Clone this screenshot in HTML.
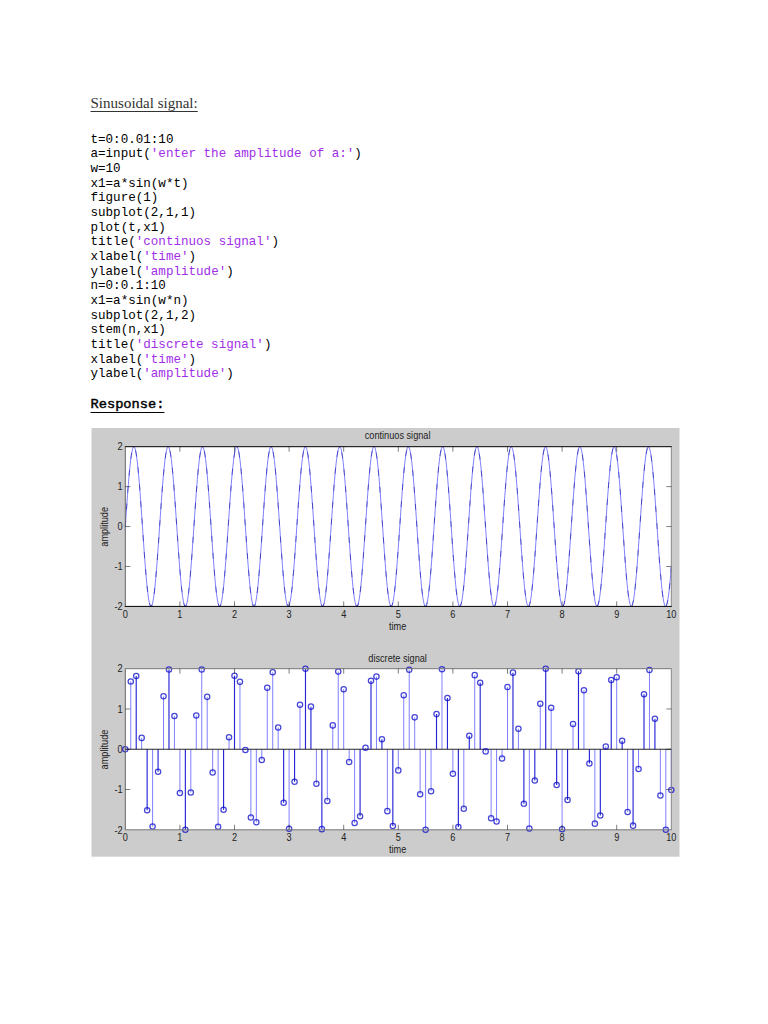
<!DOCTYPE html>
<html><head><meta charset="utf-8"><title>Sinusoidal signal</title>
<style>
html,body{margin:0;padding:0;background:#fff;}
body{width:768px;height:1024px;position:relative;overflow:hidden;}
.h{position:absolute;left:90.5px;top:94.4px;font-family:"Liberation Serif","Times New Roman",serif;font-size:15.02px;line-height:18px;color:#333;text-decoration:underline;text-decoration-thickness:1px;text-underline-offset:2.6px;text-decoration-skip-ink:none;white-space:nowrap;}
pre{position:absolute;left:90.5px;top:132.6px;margin:0;font-family:"Liberation Mono","Courier New",monospace;font-size:12.57px;line-height:14.67px;color:#000;white-space:pre;}
pre .s{color:#9f2ee8;}
.r{text-decoration-skip-ink:none;position:absolute;left:90.5px;top:396.5px;font-family:"Liberation Mono","Courier New",monospace;font-size:13.7px;line-height:16px;text-decoration-thickness:1.3px;text-underline-offset:3.9px;font-weight:normal;-webkit-text-stroke:0.45px #000;color:#000;text-decoration:underline;white-space:nowrap;}
</style></head><body>
<div class="h">Sinusoidal signal:</div>
<pre>t=0:0.01:10
a=input(<span class="s">'enter the amplitude of a:'</span>)
w=10
x1=a*sin(w*t)
figure(1)
subplot(2,1,1)
plot(t,x1)
title(<span class="s">'continuos signal'</span>)
xlabel(<span class="s">'time'</span>)
ylabel(<span class="s">'amplitude'</span>)
n=0:0.1:10
x1=a*sin(w*n)
subplot(2,1,2)
stem(n,x1)
title(<span class="s">'discrete signal'</span>)
xlabel(<span class="s">'time'</span>)
ylabel(<span class="s">'amplitude'</span>)</pre>
<div class="r">Response:</div>
<svg width="768" height="1024" viewBox="0 0 768 1024" style="position:absolute;left:0;top:0">
<rect x="91.5" y="428" width="588.0" height="428.70000000000005" fill="#cccccc"/>
<rect x="125.3" y="446.7" width="546.0" height="159.7" fill="#fff" stroke="none"/>
<polyline points="125.30,526.55 125.85,518.58 126.39,510.69 126.94,502.95 127.48,495.45 128.03,488.27 128.58,481.46 129.12,475.11 129.67,469.27 130.21,464.00 130.76,459.36 131.31,455.39 131.85,452.13 132.40,449.61 132.94,447.86 133.49,446.90 134.04,446.73 134.58,447.37 135.13,448.79 135.67,450.99 136.22,453.94 136.77,457.62 137.31,461.99 137.86,467.01 138.40,472.61 138.95,478.76 139.50,485.39 140.04,492.42 140.59,499.80 141.13,507.45 141.68,515.28 142.23,523.23 142.77,531.21 143.32,539.15 143.86,546.95 144.41,554.56 144.96,561.89 145.50,568.86 146.05,575.41 146.59,581.47 147.14,586.98 147.69,591.89 148.23,596.15 148.78,599.71 149.32,602.54 149.87,604.61 150.42,605.90 150.96,606.39 151.51,606.09 152.05,605.00 152.60,603.12 153.15,600.48 153.69,597.09 154.24,593.01 154.78,588.26 155.33,582.89 155.88,576.96 156.42,570.52 156.97,563.65 157.51,556.40 158.06,548.86 158.61,541.10 159.15,533.18 159.70,525.21 160.24,517.24 160.79,509.37 161.34,501.67 161.88,494.22 162.43,487.10 162.97,480.36 163.52,474.09 164.07,468.34 164.61,463.18 165.16,458.64 165.70,454.79 166.25,451.65 166.80,449.26 167.34,447.64 167.89,446.82 168.43,446.78 168.98,447.55 169.53,449.10 170.07,451.43 170.62,454.51 171.16,458.31 171.71,462.79 172.26,467.91 172.80,473.61 173.35,479.84 173.89,486.54 174.44,493.64 174.99,501.07 175.53,508.75 176.08,516.61 176.62,524.57 177.17,532.55 177.72,540.47 178.26,548.25 178.81,555.81 179.35,563.08 179.90,569.99 180.45,576.46 180.99,582.43 181.54,587.85 182.08,592.65 182.63,596.79 183.18,600.23 183.72,602.94 184.27,604.88 184.81,606.04 185.36,606.40 185.91,605.97 186.45,604.74 187.00,602.73 187.54,599.96 188.09,596.45 188.64,592.25 189.18,587.39 189.73,581.93 190.27,575.91 190.82,569.40 191.37,562.45 191.91,555.15 192.46,547.57 193.00,539.77 193.55,531.85 194.10,523.87 194.64,515.91 195.19,508.06 195.73,500.40 196.28,493.00 196.83,485.93 197.37,479.27 197.92,473.08 198.46,467.43 199.01,462.37 199.56,457.95 200.10,454.21 200.65,451.20 201.19,448.94 201.74,447.45 202.29,446.76 202.83,446.86 203.38,447.76 203.92,449.44 204.47,451.90 205.02,455.10 205.56,459.02 206.11,463.61 206.65,468.83 207.20,474.62 207.75,480.94 208.29,487.71 208.84,494.87 209.38,502.35 209.93,510.06 210.48,517.95 211.02,525.91 211.57,533.89 212.11,541.79 212.66,549.54 213.21,557.06 213.75,564.27 214.30,571.11 214.84,577.50 215.39,583.39 215.94,588.70 216.48,593.40 217.03,597.42 217.57,600.74 218.12,603.32 218.67,605.13 219.21,606.15 219.76,606.38 220.30,605.81 220.85,604.45 221.40,602.32 221.94,599.42 222.49,595.80 223.03,591.48 223.58,586.52 224.13,580.95 224.67,574.85 225.22,568.26 225.76,561.25 226.31,553.90 226.86,546.27 227.40,538.45 227.95,530.51 228.49,522.52 229.04,514.58 229.59,506.76 230.13,499.14 230.68,491.79 231.22,484.78 231.77,478.20 232.32,472.10 232.86,466.54 233.41,461.58 233.95,457.27 234.50,453.65 235.05,450.76 235.59,448.63 236.14,447.28 236.68,446.72 237.23,446.95 237.78,447.99 238.32,449.80 238.87,452.39 239.41,455.71 239.96,459.74 240.51,464.44 241.05,469.76 241.60,475.65 242.14,482.05 242.69,488.89 243.24,496.11 243.78,503.63 244.33,511.38 244.87,519.28 245.42,527.26 245.97,535.22 246.51,543.11 247.06,550.82 247.60,558.29 248.15,565.45 248.70,572.22 249.24,578.53 249.79,584.32 250.33,589.54 250.88,594.12 251.43,598.03 251.97,601.23 252.52,603.68 253.06,605.36 253.61,606.25 254.16,606.34 254.70,605.64 255.25,604.15 255.79,601.88 256.34,598.86 256.89,595.12 257.43,590.69 257.98,585.62 258.52,579.96 259.07,573.77 259.62,567.11 260.16,560.04 260.71,552.63 261.25,544.97 261.80,537.12 262.35,529.16 262.89,521.18 263.44,513.26 263.98,505.46 264.53,497.88 265.08,490.58 265.62,483.64 266.17,477.14 266.71,471.12 267.26,465.66 267.81,460.81 268.35,456.61 268.90,453.11 269.44,450.35 269.99,448.35 270.54,447.13 271.08,446.70 271.63,447.07 272.17,448.24 272.72,450.18 273.27,452.89 273.81,456.34 274.36,460.49 274.90,465.30 275.45,470.72 276.00,476.69 276.54,483.17 277.09,490.08 277.63,497.35 278.18,504.92 278.73,512.70 279.27,520.62 279.82,528.60 280.36,536.56 280.91,544.42 281.46,552.10 282.00,559.52 282.55,566.62 283.09,573.31 283.64,579.54 284.19,585.24 284.73,590.35 285.28,594.83 285.82,598.62 286.37,601.69 286.92,604.01 287.46,605.56 288.01,606.32 288.55,606.28 289.10,605.44 289.65,603.82 290.19,601.42 290.74,598.28 291.28,594.42 291.83,589.88 292.38,584.71 292.92,578.96 293.47,572.68 294.01,565.94 294.56,558.81 295.11,551.36 295.65,543.66 296.20,535.79 296.74,527.82 297.29,519.84 297.84,511.93 298.38,504.17 298.93,496.63 299.47,489.39 300.02,482.52 300.57,476.09 301.11,470.16 301.66,464.80 302.20,460.05 302.75,455.97 303.30,452.60 303.84,449.96 304.39,448.09 304.93,447.00 305.48,446.71 306.03,447.21 306.57,448.51 307.12,450.59 307.66,453.42 308.21,456.99 308.76,461.25 309.30,466.17 309.85,471.68 310.39,477.75 310.94,484.30 311.49,491.28 312.03,498.61 312.58,506.21 313.12,514.02 313.67,521.96 314.22,529.94 314.76,537.89 315.31,545.72 315.85,553.37 316.40,560.74 316.95,567.77 317.49,574.39 318.04,580.54 318.58,586.14 319.13,591.15 319.68,595.51 320.22,599.19 320.77,602.13 321.31,604.33 321.86,605.74 322.41,606.37 322.95,606.19 323.50,605.23 324.04,603.47 324.59,600.95 325.14,597.68 325.68,593.70 326.23,589.05 326.77,583.78 327.32,577.94 327.87,571.58 328.41,564.77 328.96,557.58 329.50,550.08 330.05,542.34 330.60,534.45 331.14,526.48 331.69,518.51 332.23,510.62 332.78,502.88 333.33,495.39 333.87,488.21 334.42,481.40 334.96,475.05 335.51,469.22 336.06,463.96 336.60,459.32 337.15,455.35 337.69,452.10 338.24,449.59 338.79,447.85 339.33,446.90 339.88,446.74 340.42,447.37 340.97,448.80 341.52,451.01 342.06,453.97 342.61,457.66 343.15,462.03 343.70,467.05 344.25,472.67 344.79,478.82 345.34,485.45 345.88,492.49 346.43,499.87 346.98,507.51 347.52,515.35 348.07,523.30 348.61,531.28 349.16,539.22 349.71,547.02 350.25,554.63 350.80,561.95 351.34,568.92 351.89,575.46 352.44,581.52 352.98,587.03 353.53,591.93 354.07,596.18 354.62,599.73 355.17,602.56 355.71,604.62 356.26,605.90 356.80,606.39 357.35,606.09 357.90,604.99 358.44,603.10 358.99,600.45 359.53,597.06 360.08,592.97 360.63,588.21 361.17,582.84 361.72,576.90 362.26,570.46 362.81,563.59 363.36,556.34 363.90,548.79 364.45,541.03 364.99,533.11 365.54,525.14 366.09,517.17 366.63,509.30 367.18,501.61 367.72,494.16 368.27,487.03 368.82,480.30 369.36,474.04 369.91,468.29 370.45,463.13 371.00,458.61 371.55,454.76 372.09,451.63 372.64,449.24 373.18,447.63 373.73,446.81 374.28,446.79 374.82,447.56 375.37,449.12 375.91,451.46 376.46,454.54 377.01,458.35 377.55,462.83 378.10,467.96 378.64,473.67 379.19,479.90 379.74,486.60 380.28,493.71 380.83,501.14 381.37,508.82 381.92,516.68 382.47,524.64 383.01,532.62 383.56,540.54 384.10,548.32 384.65,555.88 385.20,563.15 385.74,570.05 386.29,576.52 386.83,582.49 387.38,587.90 387.93,592.69 388.47,596.83 389.02,600.26 389.56,602.96 390.11,604.89 390.66,606.04 391.20,606.40 391.75,605.96 392.29,604.72 392.84,602.71 393.39,599.93 393.93,596.42 394.48,592.21 395.02,587.35 395.57,581.88 396.12,575.85 396.66,569.34 397.21,562.39 397.75,555.09 398.30,547.50 398.85,539.70 399.39,531.78 399.94,523.79 400.48,515.84 401.03,507.99 401.58,500.33 402.12,492.94 402.67,485.87 403.21,479.22 403.76,473.03 404.31,467.38 404.85,462.33 405.40,457.91 405.94,454.18 406.49,451.17 407.04,448.92 407.58,447.44 408.13,446.75 408.67,446.86 409.22,447.77 409.77,449.46 410.31,451.92 410.86,455.13 411.40,459.05 411.95,463.65 412.50,468.88 413.04,474.68 413.59,481.00 414.13,487.77 414.68,494.94 415.23,502.41 415.77,510.13 416.32,518.02 416.86,525.99 417.41,533.96 417.96,541.86 418.50,549.61 419.05,557.12 419.59,564.34 420.14,571.17 420.69,577.56 421.23,583.44 421.78,588.75 422.32,593.43 422.87,597.45 423.42,600.77 423.96,603.34 424.51,605.14 425.05,606.16 425.60,606.38 426.15,605.81 426.69,604.44 427.24,602.29 427.78,599.39 428.33,595.76 428.88,591.44 429.42,586.47 429.97,580.90 430.51,574.79 431.06,568.20 431.61,561.19 432.15,553.83 432.70,546.20 433.24,538.38 433.79,530.43 434.34,522.45 434.88,514.51 435.43,506.69 435.97,499.07 436.52,491.72 437.07,484.72 437.61,478.14 438.16,472.04 438.70,466.49 439.25,461.54 439.80,457.23 440.34,453.62 440.89,450.74 441.43,448.62 441.98,447.27 442.53,446.72 443.07,446.96 443.62,448.00 444.16,449.82 444.71,452.41 445.26,455.74 445.80,459.78 446.35,464.49 446.89,469.81 447.44,475.71 447.99,482.11 448.53,488.95 449.08,496.17 449.62,503.70 450.17,511.45 450.72,519.35 451.26,527.33 451.81,535.30 452.35,543.18 452.90,550.89 453.45,558.36 453.99,565.51 454.54,572.28 455.08,578.58 455.63,584.37 456.18,589.58 456.72,594.16 457.27,598.06 457.81,601.25 458.36,603.69 458.91,605.37 459.45,606.25 460.00,606.34 460.54,605.63 461.09,604.13 461.64,601.86 462.18,598.83 462.73,595.08 463.27,590.65 463.82,585.57 464.37,579.91 464.91,573.71 465.46,567.04 466.00,559.97 466.55,552.56 467.10,544.90 467.64,537.05 468.19,529.09 468.73,521.11 469.28,513.19 469.83,505.39 470.37,497.81 470.92,490.52 471.46,483.59 472.01,477.08 472.56,471.07 473.10,465.61 473.65,460.77 474.19,456.58 474.74,453.09 475.29,450.33 475.83,448.33 476.38,447.12 476.92,446.70 477.47,447.08 478.02,448.25 478.56,450.20 479.11,452.92 479.65,456.37 480.20,460.53 480.75,465.34 481.29,470.77 481.84,476.75 482.38,483.23 482.93,490.14 483.48,497.42 484.02,504.99 484.57,512.77 485.11,520.69 485.66,528.67 486.21,536.63 486.75,544.49 487.30,552.16 487.84,559.59 488.39,566.68 488.94,573.37 489.48,579.59 490.03,585.29 490.57,590.39 491.12,594.86 491.67,598.65 492.21,601.72 492.76,604.03 493.30,605.57 493.85,606.32 494.40,606.28 494.94,605.43 495.49,603.80 496.03,601.40 496.58,598.25 497.13,594.38 497.67,589.84 498.22,584.66 498.76,578.90 499.31,572.62 499.86,565.88 500.40,558.75 500.95,551.29 501.49,543.59 502.04,535.72 502.59,527.75 503.13,519.77 503.68,511.86 504.22,504.10 504.77,496.56 505.32,489.33 505.86,482.46 506.41,476.03 506.95,470.11 507.50,464.75 508.05,460.01 508.59,455.94 509.14,452.57 509.68,449.94 510.23,448.07 510.78,446.99 511.32,446.71 511.87,447.22 512.41,448.52 512.96,450.61 513.51,453.45 514.05,457.02 514.60,461.29 515.14,466.21 515.69,471.73 516.24,477.81 516.78,484.36 517.33,491.34 517.87,498.67 518.42,506.28 518.97,514.09 519.51,522.03 520.06,530.01 520.60,537.96 521.15,545.79 521.70,553.43 522.24,560.80 522.79,567.83 523.33,574.45 523.88,580.59 524.43,586.19 524.97,591.19 525.52,595.55 526.06,599.22 526.61,602.16 527.16,604.34 527.70,605.75 528.25,606.37 528.79,606.19 529.34,605.21 529.89,603.45 530.43,600.92 530.98,597.65 531.52,593.66 532.07,589.01 532.62,583.73 533.16,577.88 533.71,571.52 534.25,564.71 534.80,557.51 535.35,550.01 535.89,542.27 536.44,534.38 536.98,526.41 537.53,518.44 538.08,510.55 538.62,502.82 539.17,495.32 539.71,488.14 540.26,481.35 540.81,475.00 541.35,469.17 541.90,463.91 542.44,459.28 542.99,455.32 543.54,452.08 544.08,449.57 544.63,447.84 545.17,446.89 545.72,446.74 546.27,447.38 546.81,448.82 547.36,451.03 547.90,454.00 548.45,457.69 549.00,462.08 549.54,467.10 550.09,472.72 550.63,478.88 551.18,485.51 551.73,492.55 552.27,499.93 552.82,507.58 553.36,515.42 553.91,523.37 554.46,531.35 555.00,539.29 555.55,547.09 556.09,554.69 556.64,562.01 557.19,568.98 557.73,575.52 558.28,581.57 558.82,587.07 559.37,591.97 559.92,596.21 560.46,599.76 561.01,602.58 561.55,604.64 562.10,605.91 562.65,606.40 563.19,606.08 563.74,604.97 564.28,603.08 564.83,600.42 565.38,597.03 565.92,592.93 566.47,588.17 567.01,582.79 567.56,576.85 568.11,570.40 568.65,563.52 569.20,556.27 569.74,548.73 570.29,540.96 570.84,533.04 571.38,525.07 571.93,517.10 572.47,509.23 573.02,501.54 573.57,494.09 574.11,486.97 574.66,480.25 575.20,473.98 575.75,468.24 576.30,463.09 576.84,458.57 577.39,454.73 577.93,451.60 578.48,449.23 579.03,447.62 579.57,446.81 580.12,446.79 580.66,447.57 581.21,449.14 581.76,451.48 582.30,454.57 582.85,458.38 583.39,462.88 583.94,468.00 584.49,473.72 585.03,479.96 585.58,486.67 586.12,493.77 586.67,501.20 587.22,508.89 587.76,516.75 588.31,524.71 588.85,532.69 589.40,540.61 589.95,548.39 590.49,555.95 591.04,563.21 591.58,570.11 592.13,576.57 592.68,582.54 593.22,587.94 593.77,592.73 594.31,596.86 594.86,600.29 595.41,602.98 595.95,604.91 596.50,606.05 597.04,606.40 597.59,605.95 598.14,604.71 598.68,602.69 599.23,599.90 599.77,596.39 600.32,592.17 600.87,587.30 601.41,581.83 601.96,575.80 602.50,569.28 603.05,562.33 603.60,555.02 604.14,547.43 604.69,539.63 605.23,531.70 605.78,523.72 606.33,515.77 606.87,507.93 607.42,500.27 607.96,492.87 608.51,485.81 609.06,479.16 609.60,472.98 610.15,467.34 610.69,462.28 611.24,457.87 611.79,454.15 612.33,451.15 612.88,448.90 613.42,447.43 613.97,446.75 614.52,446.87 615.06,447.78 615.61,449.48 616.15,451.95 616.70,455.16 617.25,459.09 617.79,463.70 618.34,468.93 618.88,474.73 619.43,481.06 619.98,487.84 620.52,495.00 621.07,502.48 621.61,510.20 622.16,518.09 622.71,526.06 623.25,534.03 623.80,541.93 624.34,549.67 624.89,557.19 625.44,564.40 625.98,571.23 626.53,577.61 627.07,583.49 627.62,588.79 628.17,593.47 628.71,597.49 629.26,600.79 629.80,603.36 630.35,605.15 630.90,606.16 631.44,606.38 631.99,605.80 632.53,604.42 633.08,602.27 633.63,599.36 634.17,595.73 634.72,591.40 635.26,586.42 635.81,580.85 636.36,574.73 636.90,568.14 637.45,561.12 637.99,553.76 638.54,546.13 639.09,538.31 639.63,530.36 640.18,522.38 640.72,514.44 641.27,506.62 641.82,499.00 642.36,491.66 642.91,484.66 643.45,478.08 644.00,471.99 644.55,466.44 645.09,461.50 645.64,457.20 646.18,453.59 646.73,450.72 647.28,448.60 647.82,447.26 648.37,446.71 648.91,446.96 649.46,448.01 650.01,449.84 650.55,452.44 651.10,455.78 651.64,459.82 652.19,464.53 652.74,469.86 653.28,475.76 653.83,482.17 654.37,489.01 654.92,496.24 655.47,503.76 656.01,511.52 656.56,519.42 657.10,527.40 657.65,535.37 658.20,543.24 658.74,550.96 659.29,558.42 659.83,565.57 660.38,572.33 660.93,578.64 661.47,584.42 662.02,589.62 662.56,594.20 663.11,598.09 663.66,601.28 664.20,603.71 664.75,605.38 665.29,606.26 665.84,606.34 666.39,605.62 666.93,604.11 667.48,601.83 668.02,598.80 668.57,595.04 669.12,590.61 669.66,585.53 670.21,579.86 670.75,573.66 671.30,566.98" fill="none" stroke="#0000ff" stroke-width="1" stroke-opacity="0.5" stroke-linejoin="round"/>
<polyline points="125.30,526.55 125.85,518.58 126.39,510.69 126.94,502.95 127.48,495.45 128.03,488.27 128.58,481.46 129.12,475.11 129.67,469.27 130.21,464.00 130.76,459.36 131.31,455.39 131.85,452.13 132.40,449.61 132.94,447.86 133.49,446.90 134.04,446.73 134.58,447.37 135.13,448.79 135.67,450.99 136.22,453.94 136.77,457.62 137.31,461.99 137.86,467.01 138.40,472.61 138.95,478.76 139.50,485.39 140.04,492.42 140.59,499.80 141.13,507.45 141.68,515.28 142.23,523.23 142.77,531.21 143.32,539.15 143.86,546.95 144.41,554.56 144.96,561.89 145.50,568.86 146.05,575.41 146.59,581.47 147.14,586.98 147.69,591.89 148.23,596.15 148.78,599.71 149.32,602.54 149.87,604.61 150.42,605.90 150.96,606.39 151.51,606.09 152.05,605.00 152.60,603.12 153.15,600.48 153.69,597.09 154.24,593.01 154.78,588.26 155.33,582.89 155.88,576.96 156.42,570.52 156.97,563.65 157.51,556.40 158.06,548.86 158.61,541.10 159.15,533.18 159.70,525.21 160.24,517.24 160.79,509.37 161.34,501.67 161.88,494.22 162.43,487.10 162.97,480.36 163.52,474.09 164.07,468.34 164.61,463.18 165.16,458.64 165.70,454.79 166.25,451.65 166.80,449.26 167.34,447.64 167.89,446.82 168.43,446.78 168.98,447.55 169.53,449.10 170.07,451.43 170.62,454.51 171.16,458.31 171.71,462.79 172.26,467.91 172.80,473.61 173.35,479.84 173.89,486.54 174.44,493.64 174.99,501.07 175.53,508.75 176.08,516.61 176.62,524.57 177.17,532.55 177.72,540.47 178.26,548.25 178.81,555.81 179.35,563.08 179.90,569.99 180.45,576.46 180.99,582.43 181.54,587.85 182.08,592.65 182.63,596.79 183.18,600.23 183.72,602.94 184.27,604.88 184.81,606.04 185.36,606.40 185.91,605.97 186.45,604.74 187.00,602.73 187.54,599.96 188.09,596.45 188.64,592.25 189.18,587.39 189.73,581.93 190.27,575.91 190.82,569.40 191.37,562.45 191.91,555.15 192.46,547.57 193.00,539.77 193.55,531.85 194.10,523.87 194.64,515.91 195.19,508.06 195.73,500.40 196.28,493.00 196.83,485.93 197.37,479.27 197.92,473.08 198.46,467.43 199.01,462.37 199.56,457.95 200.10,454.21 200.65,451.20 201.19,448.94 201.74,447.45 202.29,446.76 202.83,446.86 203.38,447.76 203.92,449.44 204.47,451.90 205.02,455.10 205.56,459.02 206.11,463.61 206.65,468.83 207.20,474.62 207.75,480.94 208.29,487.71 208.84,494.87 209.38,502.35 209.93,510.06 210.48,517.95 211.02,525.91 211.57,533.89 212.11,541.79 212.66,549.54 213.21,557.06 213.75,564.27 214.30,571.11 214.84,577.50 215.39,583.39 215.94,588.70 216.48,593.40 217.03,597.42 217.57,600.74 218.12,603.32 218.67,605.13 219.21,606.15 219.76,606.38 220.30,605.81 220.85,604.45 221.40,602.32 221.94,599.42 222.49,595.80 223.03,591.48 223.58,586.52 224.13,580.95 224.67,574.85 225.22,568.26 225.76,561.25 226.31,553.90 226.86,546.27 227.40,538.45 227.95,530.51 228.49,522.52 229.04,514.58 229.59,506.76 230.13,499.14 230.68,491.79 231.22,484.78 231.77,478.20 232.32,472.10 232.86,466.54 233.41,461.58 233.95,457.27 234.50,453.65 235.05,450.76 235.59,448.63 236.14,447.28 236.68,446.72 237.23,446.95 237.78,447.99 238.32,449.80 238.87,452.39 239.41,455.71 239.96,459.74 240.51,464.44 241.05,469.76 241.60,475.65 242.14,482.05 242.69,488.89 243.24,496.11 243.78,503.63 244.33,511.38 244.87,519.28 245.42,527.26 245.97,535.22 246.51,543.11 247.06,550.82 247.60,558.29 248.15,565.45 248.70,572.22 249.24,578.53 249.79,584.32 250.33,589.54 250.88,594.12 251.43,598.03 251.97,601.23 252.52,603.68 253.06,605.36 253.61,606.25 254.16,606.34 254.70,605.64 255.25,604.15 255.79,601.88 256.34,598.86 256.89,595.12 257.43,590.69 257.98,585.62 258.52,579.96 259.07,573.77 259.62,567.11 260.16,560.04 260.71,552.63 261.25,544.97 261.80,537.12 262.35,529.16 262.89,521.18 263.44,513.26 263.98,505.46 264.53,497.88 265.08,490.58 265.62,483.64 266.17,477.14 266.71,471.12 267.26,465.66 267.81,460.81 268.35,456.61 268.90,453.11 269.44,450.35 269.99,448.35 270.54,447.13 271.08,446.70 271.63,447.07 272.17,448.24 272.72,450.18 273.27,452.89 273.81,456.34 274.36,460.49 274.90,465.30 275.45,470.72 276.00,476.69 276.54,483.17 277.09,490.08 277.63,497.35 278.18,504.92 278.73,512.70 279.27,520.62 279.82,528.60 280.36,536.56 280.91,544.42 281.46,552.10 282.00,559.52 282.55,566.62 283.09,573.31 283.64,579.54 284.19,585.24 284.73,590.35 285.28,594.83 285.82,598.62 286.37,601.69 286.92,604.01 287.46,605.56 288.01,606.32 288.55,606.28 289.10,605.44 289.65,603.82 290.19,601.42 290.74,598.28 291.28,594.42 291.83,589.88 292.38,584.71 292.92,578.96 293.47,572.68 294.01,565.94 294.56,558.81 295.11,551.36 295.65,543.66 296.20,535.79 296.74,527.82 297.29,519.84 297.84,511.93 298.38,504.17 298.93,496.63 299.47,489.39 300.02,482.52 300.57,476.09 301.11,470.16 301.66,464.80 302.20,460.05 302.75,455.97 303.30,452.60 303.84,449.96 304.39,448.09 304.93,447.00 305.48,446.71 306.03,447.21 306.57,448.51 307.12,450.59 307.66,453.42 308.21,456.99 308.76,461.25 309.30,466.17 309.85,471.68 310.39,477.75 310.94,484.30 311.49,491.28 312.03,498.61 312.58,506.21 313.12,514.02 313.67,521.96 314.22,529.94 314.76,537.89 315.31,545.72 315.85,553.37 316.40,560.74 316.95,567.77 317.49,574.39 318.04,580.54 318.58,586.14 319.13,591.15 319.68,595.51 320.22,599.19 320.77,602.13 321.31,604.33 321.86,605.74 322.41,606.37 322.95,606.19 323.50,605.23 324.04,603.47 324.59,600.95 325.14,597.68 325.68,593.70 326.23,589.05 326.77,583.78 327.32,577.94 327.87,571.58 328.41,564.77 328.96,557.58 329.50,550.08 330.05,542.34 330.60,534.45 331.14,526.48 331.69,518.51 332.23,510.62 332.78,502.88 333.33,495.39 333.87,488.21 334.42,481.40 334.96,475.05 335.51,469.22 336.06,463.96 336.60,459.32 337.15,455.35 337.69,452.10 338.24,449.59 338.79,447.85 339.33,446.90 339.88,446.74 340.42,447.37 340.97,448.80 341.52,451.01 342.06,453.97 342.61,457.66 343.15,462.03 343.70,467.05 344.25,472.67 344.79,478.82 345.34,485.45 345.88,492.49 346.43,499.87 346.98,507.51 347.52,515.35 348.07,523.30 348.61,531.28 349.16,539.22 349.71,547.02 350.25,554.63 350.80,561.95 351.34,568.92 351.89,575.46 352.44,581.52 352.98,587.03 353.53,591.93 354.07,596.18 354.62,599.73 355.17,602.56 355.71,604.62 356.26,605.90 356.80,606.39 357.35,606.09 357.90,604.99 358.44,603.10 358.99,600.45 359.53,597.06 360.08,592.97 360.63,588.21 361.17,582.84 361.72,576.90 362.26,570.46 362.81,563.59 363.36,556.34 363.90,548.79 364.45,541.03 364.99,533.11 365.54,525.14 366.09,517.17 366.63,509.30 367.18,501.61 367.72,494.16 368.27,487.03 368.82,480.30 369.36,474.04 369.91,468.29 370.45,463.13 371.00,458.61 371.55,454.76 372.09,451.63 372.64,449.24 373.18,447.63 373.73,446.81 374.28,446.79 374.82,447.56 375.37,449.12 375.91,451.46 376.46,454.54 377.01,458.35 377.55,462.83 378.10,467.96 378.64,473.67 379.19,479.90 379.74,486.60 380.28,493.71 380.83,501.14 381.37,508.82 381.92,516.68 382.47,524.64 383.01,532.62 383.56,540.54 384.10,548.32 384.65,555.88 385.20,563.15 385.74,570.05 386.29,576.52 386.83,582.49 387.38,587.90 387.93,592.69 388.47,596.83 389.02,600.26 389.56,602.96 390.11,604.89 390.66,606.04 391.20,606.40 391.75,605.96 392.29,604.72 392.84,602.71 393.39,599.93 393.93,596.42 394.48,592.21 395.02,587.35 395.57,581.88 396.12,575.85 396.66,569.34 397.21,562.39 397.75,555.09 398.30,547.50 398.85,539.70 399.39,531.78 399.94,523.79 400.48,515.84 401.03,507.99 401.58,500.33 402.12,492.94 402.67,485.87 403.21,479.22 403.76,473.03 404.31,467.38 404.85,462.33 405.40,457.91 405.94,454.18 406.49,451.17 407.04,448.92 407.58,447.44 408.13,446.75 408.67,446.86 409.22,447.77 409.77,449.46 410.31,451.92 410.86,455.13 411.40,459.05 411.95,463.65 412.50,468.88 413.04,474.68 413.59,481.00 414.13,487.77 414.68,494.94 415.23,502.41 415.77,510.13 416.32,518.02 416.86,525.99 417.41,533.96 417.96,541.86 418.50,549.61 419.05,557.12 419.59,564.34 420.14,571.17 420.69,577.56 421.23,583.44 421.78,588.75 422.32,593.43 422.87,597.45 423.42,600.77 423.96,603.34 424.51,605.14 425.05,606.16 425.60,606.38 426.15,605.81 426.69,604.44 427.24,602.29 427.78,599.39 428.33,595.76 428.88,591.44 429.42,586.47 429.97,580.90 430.51,574.79 431.06,568.20 431.61,561.19 432.15,553.83 432.70,546.20 433.24,538.38 433.79,530.43 434.34,522.45 434.88,514.51 435.43,506.69 435.97,499.07 436.52,491.72 437.07,484.72 437.61,478.14 438.16,472.04 438.70,466.49 439.25,461.54 439.80,457.23 440.34,453.62 440.89,450.74 441.43,448.62 441.98,447.27 442.53,446.72 443.07,446.96 443.62,448.00 444.16,449.82 444.71,452.41 445.26,455.74 445.80,459.78 446.35,464.49 446.89,469.81 447.44,475.71 447.99,482.11 448.53,488.95 449.08,496.17 449.62,503.70 450.17,511.45 450.72,519.35 451.26,527.33 451.81,535.30 452.35,543.18 452.90,550.89 453.45,558.36 453.99,565.51 454.54,572.28 455.08,578.58 455.63,584.37 456.18,589.58 456.72,594.16 457.27,598.06 457.81,601.25 458.36,603.69 458.91,605.37 459.45,606.25 460.00,606.34 460.54,605.63 461.09,604.13 461.64,601.86 462.18,598.83 462.73,595.08 463.27,590.65 463.82,585.57 464.37,579.91 464.91,573.71 465.46,567.04 466.00,559.97 466.55,552.56 467.10,544.90 467.64,537.05 468.19,529.09 468.73,521.11 469.28,513.19 469.83,505.39 470.37,497.81 470.92,490.52 471.46,483.59 472.01,477.08 472.56,471.07 473.10,465.61 473.65,460.77 474.19,456.58 474.74,453.09 475.29,450.33 475.83,448.33 476.38,447.12 476.92,446.70 477.47,447.08 478.02,448.25 478.56,450.20 479.11,452.92 479.65,456.37 480.20,460.53 480.75,465.34 481.29,470.77 481.84,476.75 482.38,483.23 482.93,490.14 483.48,497.42 484.02,504.99 484.57,512.77 485.11,520.69 485.66,528.67 486.21,536.63 486.75,544.49 487.30,552.16 487.84,559.59 488.39,566.68 488.94,573.37 489.48,579.59 490.03,585.29 490.57,590.39 491.12,594.86 491.67,598.65 492.21,601.72 492.76,604.03 493.30,605.57 493.85,606.32 494.40,606.28 494.94,605.43 495.49,603.80 496.03,601.40 496.58,598.25 497.13,594.38 497.67,589.84 498.22,584.66 498.76,578.90 499.31,572.62 499.86,565.88 500.40,558.75 500.95,551.29 501.49,543.59 502.04,535.72 502.59,527.75 503.13,519.77 503.68,511.86 504.22,504.10 504.77,496.56 505.32,489.33 505.86,482.46 506.41,476.03 506.95,470.11 507.50,464.75 508.05,460.01 508.59,455.94 509.14,452.57 509.68,449.94 510.23,448.07 510.78,446.99 511.32,446.71 511.87,447.22 512.41,448.52 512.96,450.61 513.51,453.45 514.05,457.02 514.60,461.29 515.14,466.21 515.69,471.73 516.24,477.81 516.78,484.36 517.33,491.34 517.87,498.67 518.42,506.28 518.97,514.09 519.51,522.03 520.06,530.01 520.60,537.96 521.15,545.79 521.70,553.43 522.24,560.80 522.79,567.83 523.33,574.45 523.88,580.59 524.43,586.19 524.97,591.19 525.52,595.55 526.06,599.22 526.61,602.16 527.16,604.34 527.70,605.75 528.25,606.37 528.79,606.19 529.34,605.21 529.89,603.45 530.43,600.92 530.98,597.65 531.52,593.66 532.07,589.01 532.62,583.73 533.16,577.88 533.71,571.52 534.25,564.71 534.80,557.51 535.35,550.01 535.89,542.27 536.44,534.38 536.98,526.41 537.53,518.44 538.08,510.55 538.62,502.82 539.17,495.32 539.71,488.14 540.26,481.35 540.81,475.00 541.35,469.17 541.90,463.91 542.44,459.28 542.99,455.32 543.54,452.08 544.08,449.57 544.63,447.84 545.17,446.89 545.72,446.74 546.27,447.38 546.81,448.82 547.36,451.03 547.90,454.00 548.45,457.69 549.00,462.08 549.54,467.10 550.09,472.72 550.63,478.88 551.18,485.51 551.73,492.55 552.27,499.93 552.82,507.58 553.36,515.42 553.91,523.37 554.46,531.35 555.00,539.29 555.55,547.09 556.09,554.69 556.64,562.01 557.19,568.98 557.73,575.52 558.28,581.57 558.82,587.07 559.37,591.97 559.92,596.21 560.46,599.76 561.01,602.58 561.55,604.64 562.10,605.91 562.65,606.40 563.19,606.08 563.74,604.97 564.28,603.08 564.83,600.42 565.38,597.03 565.92,592.93 566.47,588.17 567.01,582.79 567.56,576.85 568.11,570.40 568.65,563.52 569.20,556.27 569.74,548.73 570.29,540.96 570.84,533.04 571.38,525.07 571.93,517.10 572.47,509.23 573.02,501.54 573.57,494.09 574.11,486.97 574.66,480.25 575.20,473.98 575.75,468.24 576.30,463.09 576.84,458.57 577.39,454.73 577.93,451.60 578.48,449.23 579.03,447.62 579.57,446.81 580.12,446.79 580.66,447.57 581.21,449.14 581.76,451.48 582.30,454.57 582.85,458.38 583.39,462.88 583.94,468.00 584.49,473.72 585.03,479.96 585.58,486.67 586.12,493.77 586.67,501.20 587.22,508.89 587.76,516.75 588.31,524.71 588.85,532.69 589.40,540.61 589.95,548.39 590.49,555.95 591.04,563.21 591.58,570.11 592.13,576.57 592.68,582.54 593.22,587.94 593.77,592.73 594.31,596.86 594.86,600.29 595.41,602.98 595.95,604.91 596.50,606.05 597.04,606.40 597.59,605.95 598.14,604.71 598.68,602.69 599.23,599.90 599.77,596.39 600.32,592.17 600.87,587.30 601.41,581.83 601.96,575.80 602.50,569.28 603.05,562.33 603.60,555.02 604.14,547.43 604.69,539.63 605.23,531.70 605.78,523.72 606.33,515.77 606.87,507.93 607.42,500.27 607.96,492.87 608.51,485.81 609.06,479.16 609.60,472.98 610.15,467.34 610.69,462.28 611.24,457.87 611.79,454.15 612.33,451.15 612.88,448.90 613.42,447.43 613.97,446.75 614.52,446.87 615.06,447.78 615.61,449.48 616.15,451.95 616.70,455.16 617.25,459.09 617.79,463.70 618.34,468.93 618.88,474.73 619.43,481.06 619.98,487.84 620.52,495.00 621.07,502.48 621.61,510.20 622.16,518.09 622.71,526.06 623.25,534.03 623.80,541.93 624.34,549.67 624.89,557.19 625.44,564.40 625.98,571.23 626.53,577.61 627.07,583.49 627.62,588.79 628.17,593.47 628.71,597.49 629.26,600.79 629.80,603.36 630.35,605.15 630.90,606.16 631.44,606.38 631.99,605.80 632.53,604.42 633.08,602.27 633.63,599.36 634.17,595.73 634.72,591.40 635.26,586.42 635.81,580.85 636.36,574.73 636.90,568.14 637.45,561.12 637.99,553.76 638.54,546.13 639.09,538.31 639.63,530.36 640.18,522.38 640.72,514.44 641.27,506.62 641.82,499.00 642.36,491.66 642.91,484.66 643.45,478.08 644.00,471.99 644.55,466.44 645.09,461.50 645.64,457.20 646.18,453.59 646.73,450.72 647.28,448.60 647.82,447.26 648.37,446.71 648.91,446.96 649.46,448.01 650.01,449.84 650.55,452.44 651.10,455.78 651.64,459.82 652.19,464.53 652.74,469.86 653.28,475.76 653.83,482.17 654.37,489.01 654.92,496.24 655.47,503.76 656.01,511.52 656.56,519.42 657.10,527.40 657.65,535.37 658.20,543.24 658.74,550.96 659.29,558.42 659.83,565.57 660.38,572.33 660.93,578.64 661.47,584.42 662.02,589.62 662.56,594.20 663.11,598.09 663.66,601.28 664.20,603.71 664.75,605.38 665.29,606.26 665.84,606.34 666.39,605.62 666.93,604.11 667.48,601.83 668.02,598.80 668.57,595.04 669.12,590.61 669.66,585.53 670.21,579.86 670.75,573.66 671.30,566.98" fill="none" stroke="#000090" stroke-width="1" stroke-opacity="0.5" stroke-dasharray="6 11" stroke-linejoin="round"/>
<path d="M125.3 447.2V606.4" stroke="#666" stroke-width="1" fill="none"/>
<path d="M671.3 447.2V606.4" stroke="#888" stroke-width="1" fill="none"/>
<path d="M124.8 446.7H671.8" stroke="#000" stroke-width="1" fill="none"/>
<path d="M124.8 606.4H671.8" stroke="#000" stroke-width="1" fill="none"/>
<path d="M179.90 606.4v-5M179.90 446.7v5M234.50 606.4v-5M234.50 446.7v5M289.10 606.4v-5M289.10 446.7v5M343.70 606.4v-5M343.70 446.7v5M398.30 606.4v-5M398.30 446.7v5M452.90 606.4v-5M452.90 446.7v5M507.50 606.4v-5M507.50 446.7v5M562.10 606.4v-5M562.10 446.7v5M616.70 606.4v-5M616.70 446.7v5M125.3 566.48h5M671.3 566.48h-5M125.3 526.55h5M671.3 526.55h-5M125.3 486.62h5M671.3 486.62h-5" stroke="#000" stroke-opacity="0.5" stroke-width="1" fill="none"/>
<g font-family="'Liberation Sans', Arial, sans-serif" font-size="10.2" fill="#222">
<text transform="translate(125.30 617.50) scale(0.9 1)" text-anchor="middle">0</text>
<text transform="translate(179.90 617.50) scale(0.9 1)" text-anchor="middle">1</text>
<text transform="translate(234.50 617.50) scale(0.9 1)" text-anchor="middle">2</text>
<text transform="translate(289.10 617.50) scale(0.9 1)" text-anchor="middle">3</text>
<text transform="translate(343.70 617.50) scale(0.9 1)" text-anchor="middle">4</text>
<text transform="translate(398.30 617.50) scale(0.9 1)" text-anchor="middle">5</text>
<text transform="translate(452.90 617.50) scale(0.9 1)" text-anchor="middle">6</text>
<text transform="translate(507.50 617.50) scale(0.9 1)" text-anchor="middle">7</text>
<text transform="translate(562.10 617.50) scale(0.9 1)" text-anchor="middle">8</text>
<text transform="translate(616.70 617.50) scale(0.9 1)" text-anchor="middle">9</text>
<text transform="translate(671.30 617.50) scale(0.9 1)" text-anchor="middle">10</text>
<text transform="translate(122.60 610.10) scale(0.9 1)" text-anchor="end">-2</text>
<text transform="translate(122.60 570.18) scale(0.9 1)" text-anchor="end">-1</text>
<text transform="translate(122.60 530.25) scale(0.9 1)" text-anchor="end">0</text>
<text transform="translate(122.60 490.32) scale(0.9 1)" text-anchor="end">1</text>
<text transform="translate(122.60 450.40) scale(0.9 1)" text-anchor="end">2</text>
<text transform="translate(397.60 438.80) scale(0.9 1)" text-anchor="middle">continuos signal</text>
<text transform="translate(397.60 629.60) scale(0.9 1)" text-anchor="middle">time</text>
<text transform="translate(107.60 526.85) rotate(-90) scale(0.9 1)" text-anchor="middle">amplitude</text>
</g>
<rect x="125.3" y="668.7" width="546.0" height="161.0999999999999" fill="#fff" stroke="none"/>
<path d="M125.30 749.25V749.25M130.76 749.25V681.47M141.68 749.25V737.88M152.60 749.25V826.49M163.52 749.25V696.33M174.44 749.25V716.05M179.90 749.25V793.07M190.82 749.25V792.47M196.28 749.25V715.41M201.74 749.25V669.46M207.20 749.25V696.87M212.66 749.25V772.44M218.12 749.25V826.69M229.04 749.25V737.18M239.96 749.25V681.86M245.42 749.25V749.96M250.88 749.25V817.41M256.34 749.25V822.19M261.80 749.25V759.91M267.26 749.25V687.83M272.72 749.25V672.21M278.18 749.25V727.43M289.10 749.25V828.84M300.02 749.25V704.83M316.40 749.25V783.74M327.32 749.25V801.09M332.78 749.25V725.38M338.24 749.25V671.62M343.70 749.25V689.23M349.16 749.25V762.03M354.62 749.25V823.08M365.54 749.25V747.82M376.46 749.25V676.61M387.38 749.25V811.13M398.30 749.25V770.38M403.76 749.25V695.26M409.22 749.25V669.78M414.68 749.25V717.36M420.14 749.25V794.26M425.60 749.25V829.78M431.06 749.25V791.26M441.98 749.25V669.27M452.90 749.25V773.80M463.82 749.25V808.79M474.74 749.25V675.14M485.66 749.25V751.39M491.12 749.25V818.16M496.58 749.25V821.58M502.04 749.25V758.50M507.50 749.25V686.91M518.42 749.25V728.80M529.34 749.25V828.60M540.26 749.25V703.65M551.18 749.25V707.85M562.10 749.25V829.31M573.02 749.25V724.02M583.94 749.25V690.19M594.86 749.25V823.63M605.78 749.25V746.40M616.70 749.25V677.24M627.62 749.25V812.04M638.54 749.25V769.01M649.46 749.25V670.02M660.38 749.25V795.44M665.84 749.25V829.74M671.30 749.25V790.04" stroke="#0000ff" stroke-width="1" stroke-opacity="0.5" fill="none"/>
<path d="M136.22 749.25V676.01M147.14 749.25V810.21M158.06 749.25V771.76M168.98 749.25V669.56M185.36 749.25V829.80M223.58 749.25V809.74M234.50 749.25V675.71M283.64 749.25V802.71M294.56 749.25V781.80M305.48 749.25V668.71M310.94 749.25V706.63M321.86 749.25V829.14M360.08 749.25V816.25M371.00 749.25V680.71M381.92 749.25V739.30M392.84 749.25V826.07M436.52 749.25V714.12M447.44 749.25V697.96M458.36 749.25V827.07M469.28 749.25V735.77M480.20 749.25V682.65M512.96 749.25V672.64M523.88 749.25V803.76M534.80 749.25V780.49M545.72 749.25V668.74M556.64 749.25V785.02M567.56 749.25V799.99M578.48 749.25V671.25M589.40 749.25V763.43M600.32 749.25V815.45M611.24 749.25V679.97M622.16 749.25V740.71M633.08 749.25V825.63M644.00 749.25V694.21M654.92 749.25V718.67" stroke="#0000d0" stroke-width="1.15" stroke-opacity="0.85" fill="none"/>
<path d="M125.3 749.25H671.3" stroke="#111" stroke-width="0.9"/>
<g fill="none" stroke="#0808c8" stroke-width="1.25" stroke-opacity="0.75">
<circle cx="125.30" cy="749.25" r="2.65"/>
<circle cx="130.76" cy="681.47" r="2.65"/>
<circle cx="136.22" cy="676.01" r="2.65"/>
<circle cx="141.68" cy="737.88" r="2.65"/>
<circle cx="147.14" cy="810.21" r="2.65"/>
<circle cx="152.60" cy="826.49" r="2.65"/>
<circle cx="158.06" cy="771.76" r="2.65"/>
<circle cx="163.52" cy="696.33" r="2.65"/>
<circle cx="168.98" cy="669.56" r="2.65"/>
<circle cx="174.44" cy="716.05" r="2.65"/>
<circle cx="179.90" cy="793.07" r="2.65"/>
<circle cx="185.36" cy="829.80" r="2.65"/>
<circle cx="190.82" cy="792.47" r="2.65"/>
<circle cx="196.28" cy="715.41" r="2.65"/>
<circle cx="201.74" cy="669.46" r="2.65"/>
<circle cx="207.20" cy="696.87" r="2.65"/>
<circle cx="212.66" cy="772.44" r="2.65"/>
<circle cx="218.12" cy="826.69" r="2.65"/>
<circle cx="223.58" cy="809.74" r="2.65"/>
<circle cx="229.04" cy="737.18" r="2.65"/>
<circle cx="234.50" cy="675.71" r="2.65"/>
<circle cx="239.96" cy="681.86" r="2.65"/>
<circle cx="245.42" cy="749.96" r="2.65"/>
<circle cx="250.88" cy="817.41" r="2.65"/>
<circle cx="256.34" cy="822.19" r="2.65"/>
<circle cx="261.80" cy="759.91" r="2.65"/>
<circle cx="267.26" cy="687.83" r="2.65"/>
<circle cx="272.72" cy="672.21" r="2.65"/>
<circle cx="278.18" cy="727.43" r="2.65"/>
<circle cx="283.64" cy="802.71" r="2.65"/>
<circle cx="289.10" cy="828.84" r="2.65"/>
<circle cx="294.56" cy="781.80" r="2.65"/>
<circle cx="300.02" cy="704.83" r="2.65"/>
<circle cx="305.48" cy="668.71" r="2.65"/>
<circle cx="310.94" cy="706.63" r="2.65"/>
<circle cx="316.40" cy="783.74" r="2.65"/>
<circle cx="321.86" cy="829.14" r="2.65"/>
<circle cx="327.32" cy="801.09" r="2.65"/>
<circle cx="332.78" cy="725.38" r="2.65"/>
<circle cx="338.24" cy="671.62" r="2.65"/>
<circle cx="343.70" cy="689.23" r="2.65"/>
<circle cx="349.16" cy="762.03" r="2.65"/>
<circle cx="354.62" cy="823.08" r="2.65"/>
<circle cx="360.08" cy="816.25" r="2.65"/>
<circle cx="365.54" cy="747.82" r="2.65"/>
<circle cx="371.00" cy="680.71" r="2.65"/>
<circle cx="376.46" cy="676.61" r="2.65"/>
<circle cx="381.92" cy="739.30" r="2.65"/>
<circle cx="387.38" cy="811.13" r="2.65"/>
<circle cx="392.84" cy="826.07" r="2.65"/>
<circle cx="398.30" cy="770.38" r="2.65"/>
<circle cx="403.76" cy="695.26" r="2.65"/>
<circle cx="409.22" cy="669.78" r="2.65"/>
<circle cx="414.68" cy="717.36" r="2.65"/>
<circle cx="420.14" cy="794.26" r="2.65"/>
<circle cx="425.60" cy="829.78" r="2.65"/>
<circle cx="431.06" cy="791.26" r="2.65"/>
<circle cx="436.52" cy="714.12" r="2.65"/>
<circle cx="441.98" cy="669.27" r="2.65"/>
<circle cx="447.44" cy="697.96" r="2.65"/>
<circle cx="452.90" cy="773.80" r="2.65"/>
<circle cx="458.36" cy="827.07" r="2.65"/>
<circle cx="463.82" cy="808.79" r="2.65"/>
<circle cx="469.28" cy="735.77" r="2.65"/>
<circle cx="474.74" cy="675.14" r="2.65"/>
<circle cx="480.20" cy="682.65" r="2.65"/>
<circle cx="485.66" cy="751.39" r="2.65"/>
<circle cx="491.12" cy="818.16" r="2.65"/>
<circle cx="496.58" cy="821.58" r="2.65"/>
<circle cx="502.04" cy="758.50" r="2.65"/>
<circle cx="507.50" cy="686.91" r="2.65"/>
<circle cx="512.96" cy="672.64" r="2.65"/>
<circle cx="518.42" cy="728.80" r="2.65"/>
<circle cx="523.88" cy="803.76" r="2.65"/>
<circle cx="529.34" cy="828.60" r="2.65"/>
<circle cx="534.80" cy="780.49" r="2.65"/>
<circle cx="540.26" cy="703.65" r="2.65"/>
<circle cx="545.72" cy="668.74" r="2.65"/>
<circle cx="551.18" cy="707.85" r="2.65"/>
<circle cx="556.64" cy="785.02" r="2.65"/>
<circle cx="562.10" cy="829.31" r="2.65"/>
<circle cx="567.56" cy="799.99" r="2.65"/>
<circle cx="573.02" cy="724.02" r="2.65"/>
<circle cx="578.48" cy="671.25" r="2.65"/>
<circle cx="583.94" cy="690.19" r="2.65"/>
<circle cx="589.40" cy="763.43" r="2.65"/>
<circle cx="594.86" cy="823.63" r="2.65"/>
<circle cx="600.32" cy="815.45" r="2.65"/>
<circle cx="605.78" cy="746.40" r="2.65"/>
<circle cx="611.24" cy="679.97" r="2.65"/>
<circle cx="616.70" cy="677.24" r="2.65"/>
<circle cx="622.16" cy="740.71" r="2.65"/>
<circle cx="627.62" cy="812.04" r="2.65"/>
<circle cx="633.08" cy="825.63" r="2.65"/>
<circle cx="638.54" cy="769.01" r="2.65"/>
<circle cx="644.00" cy="694.21" r="2.65"/>
<circle cx="649.46" cy="670.02" r="2.65"/>
<circle cx="654.92" cy="718.67" r="2.65"/>
<circle cx="660.38" cy="795.44" r="2.65"/>
<circle cx="665.84" cy="829.74" r="2.65"/>
<circle cx="671.30" cy="790.04" r="2.65"/>
</g>
<path d="M125.3 669.2V829.8" stroke="#666" stroke-width="1" fill="none"/>
<path d="M671.3 669.2V829.8" stroke="#888" stroke-width="1" fill="none"/>
<path d="M124.8 668.7H671.8" stroke="#777" stroke-width="1" fill="none"/>
<path d="M124.8 829.8H671.8" stroke="#777" stroke-width="1" fill="none"/>
<path d="M179.90 829.8v-5M179.90 668.7v5M234.50 829.8v-5M234.50 668.7v5M289.10 829.8v-5M289.10 668.7v5M343.70 829.8v-5M343.70 668.7v5M398.30 829.8v-5M398.30 668.7v5M452.90 829.8v-5M452.90 668.7v5M507.50 829.8v-5M507.50 668.7v5M562.10 829.8v-5M562.10 668.7v5M616.70 829.8v-5M616.70 668.7v5M125.3 789.52h5M671.3 789.52h-5M125.3 749.25h5M671.3 749.25h-5M125.3 708.98h5M671.3 708.98h-5" stroke="#000" stroke-opacity="0.5" stroke-width="1" fill="none"/>
<g font-family="'Liberation Sans', Arial, sans-serif" font-size="10.2" fill="#222">
<text transform="translate(125.30 840.90) scale(0.9 1)" text-anchor="middle">0</text>
<text transform="translate(179.90 840.90) scale(0.9 1)" text-anchor="middle">1</text>
<text transform="translate(234.50 840.90) scale(0.9 1)" text-anchor="middle">2</text>
<text transform="translate(289.10 840.90) scale(0.9 1)" text-anchor="middle">3</text>
<text transform="translate(343.70 840.90) scale(0.9 1)" text-anchor="middle">4</text>
<text transform="translate(398.30 840.90) scale(0.9 1)" text-anchor="middle">5</text>
<text transform="translate(452.90 840.90) scale(0.9 1)" text-anchor="middle">6</text>
<text transform="translate(507.50 840.90) scale(0.9 1)" text-anchor="middle">7</text>
<text transform="translate(562.10 840.90) scale(0.9 1)" text-anchor="middle">8</text>
<text transform="translate(616.70 840.90) scale(0.9 1)" text-anchor="middle">9</text>
<text transform="translate(671.30 840.90) scale(0.9 1)" text-anchor="middle">10</text>
<text transform="translate(122.60 833.50) scale(0.9 1)" text-anchor="end">-2</text>
<text transform="translate(122.60 793.23) scale(0.9 1)" text-anchor="end">-1</text>
<text transform="translate(122.60 752.95) scale(0.9 1)" text-anchor="end">0</text>
<text transform="translate(122.60 712.68) scale(0.9 1)" text-anchor="end">1</text>
<text transform="translate(122.60 672.40) scale(0.9 1)" text-anchor="end">2</text>
<text transform="translate(397.60 661.60) scale(0.9 1)" text-anchor="middle">discrete signal</text>
<text transform="translate(397.60 853.00) scale(0.9 1)" text-anchor="middle">time</text>
<text transform="translate(107.60 749.55) rotate(-90) scale(0.9 1)" text-anchor="middle">amplitude</text>
</g>
</svg>
</body></html>
